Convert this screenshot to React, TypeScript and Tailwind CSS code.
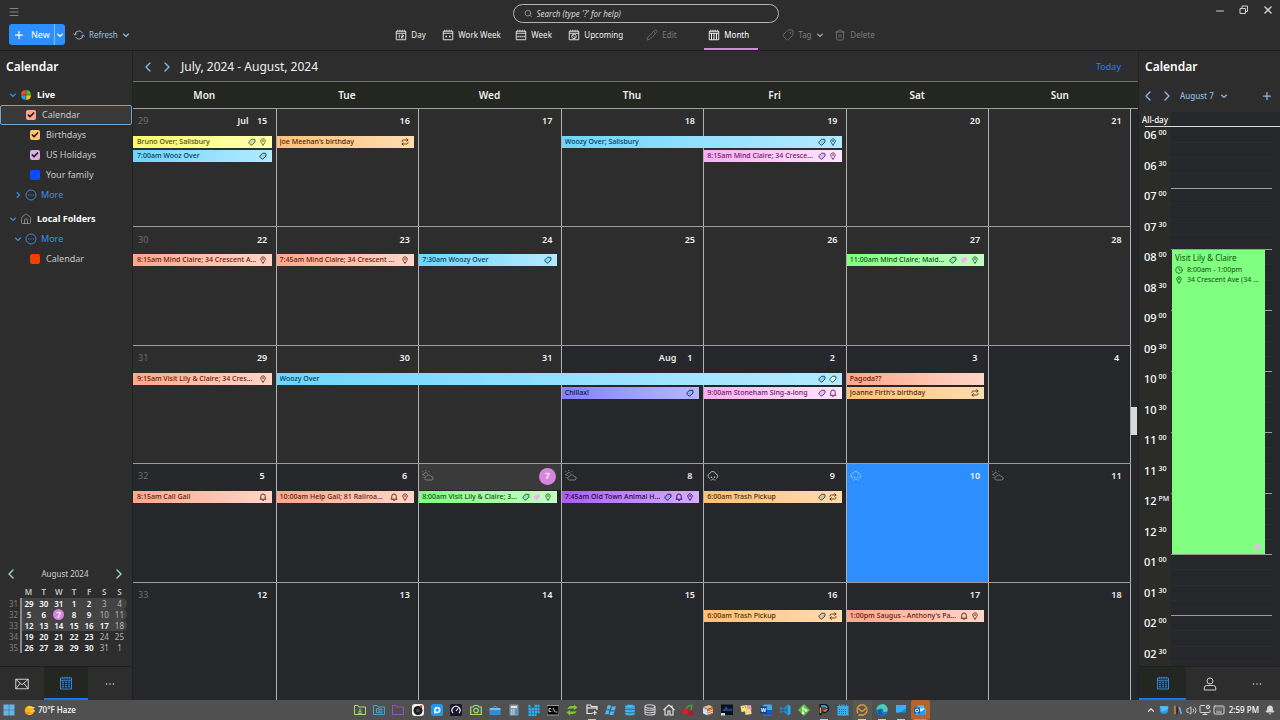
import type { ReactNode } from "react";
import { clsx } from "clsx";
import {
  Bell,
  Check,
  ChevronDown,
  ChevronLeft,
  ChevronRight,
  ChevronUp,
  Clock,
  House,
  Keyboard,
  Menu,
  Minus,
  MonitorCog,
  Pencil,
  Plus,
  Repeat,
  Search,
  Tag,
  Trash2,
  Volume2,
  X,
} from "lucide-react";

type Tone =
  | "yellow"
  | "blue"
  | "orange"
  | "pink"
  | "salmon"
  | "green"
  | "indigo"
  | "violet";
type Mark = "tag" | "tagLight" | "tagPink" | "pin" | "bell" | "repeat";

interface CalendarEvent {
  title: string;
  tone: Tone;
  col: number;
  span?: number;
  line?: number;
  marks?: Mark[];
}

interface Day {
  num: string;
  month?: string;
  dark?: boolean;
  today?: boolean;
  selected?: boolean;
  weather?: "sun" | "rain";
}

interface Week {
  num: string;
  days: Day[];
  events: CalendarEvent[];
}

const tones: Record<Tone, string> = {
  yellow: "from-[#fafa70] to-[#ffffae] text-[#4f4f00]",
  blue: "from-[#6cd6ff] to-[#b4eaff] text-[#073a55]",
  orange: "from-[#ffc078] to-[#ffdcb0] text-[#4e2a00]",
  pink: "from-[#f8b0f2] to-[#fde6fc] text-[#6e1668]",
  salmon: "from-[#ffa68c] to-[#ffd6c8] text-[#5c1a0c]",
  green: "from-[#80ff80] to-[#c4ffc4] text-[#0a520a]",
  indigo: "from-[#8282fa] to-[#b8b8ff] text-[#10104c]",
  violet: "from-[#a95cf6] to-[#d6aeff] text-[#24063f]",
};

const colStart = [
  "",
  "col-start-1",
  "col-start-2",
  "col-start-3",
  "col-start-4",
  "col-start-5",
  "col-start-6",
  "col-start-7",
];

const colSpan = ["", "col-span-1", "col-span-2", "col-span-3", "col-span-4"];

const weekdays = ["Mon", "Tue", "Wed", "Thu", "Fri", "Sat", "Sun"];

const weeks: Week[] = [
  {
    num: "29",
    days: [
      { num: "15", month: "Jul" },
      { num: "16" },
      { num: "17" },
      { num: "18" },
      { num: "19" },
      { num: "20" },
      { num: "21" },
    ],
    events: [
      { title: "Bruno Over; Salisbury", tone: "yellow", col: 1, marks: ["tag", "pin"] },
      { title: "7:00am Wooz Over", tone: "blue", col: 1, line: 2, marks: ["tag"] },
      { title: "Joe Meehan's birthday", tone: "orange", col: 2, marks: ["repeat"] },
      { title: "Woozy Over; Salisbury", tone: "blue", col: 4, span: 2, marks: ["tag", "pin"] },
      { title: "8:15am Mind Claire; 34 Cresce...", tone: "pink", col: 5, line: 2, marks: ["tag", "pin"] },
    ],
  },
  {
    num: "30",
    days: [
      { num: "22" },
      { num: "23" },
      { num: "24" },
      { num: "25" },
      { num: "26" },
      { num: "27" },
      { num: "28" },
    ],
    events: [
      { title: "8:15am Mind Claire; 34 Crescent A...", tone: "salmon", col: 1, marks: ["pin"] },
      { title: "7:45am Mind Claire; 34 Crescent ...", tone: "salmon", col: 2, marks: ["pin"] },
      { title: "7:30am Woozy Over", tone: "blue", col: 3, marks: ["tag"] },
      { title: "11:00am Mind Claire; Mald...", tone: "green", col: 6, marks: ["tag", "tagPink", "pin"] },
    ],
  },
  {
    num: "31",
    days: [
      { num: "29" },
      { num: "30" },
      { num: "31" },
      { num: "1", month: "Aug", dark: true },
      { num: "2", dark: true },
      { num: "3", dark: true },
      { num: "4", dark: true },
    ],
    events: [
      { title: "9:15am Visit Lily & Claire; 34 Cres...", tone: "salmon", col: 1, marks: ["pin"] },
      { title: "Woozy Over", tone: "blue", col: 2, span: 4, marks: ["tag", "tagLight"] },
      { title: "Chillax!", tone: "indigo", col: 4, line: 2, marks: ["tag"] },
      { title: "9:00am Stoneham Sing-a-long", tone: "pink", col: 5, line: 2, marks: ["tag", "bell"] },
      { title: "Pagoda??", tone: "salmon", col: 6 },
      { title: "Joanne Firth's birthday", tone: "orange", col: 6, line: 2, marks: ["repeat"] },
    ],
  },
  {
    num: "32",
    days: [
      { num: "5", dark: true },
      { num: "6", dark: true },
      { num: "7", dark: true, today: true, weather: "sun" },
      { num: "8", dark: true, weather: "sun" },
      { num: "9", dark: true, weather: "rain" },
      { num: "10", selected: true, weather: "rain" },
      { num: "11", dark: true, weather: "sun" },
    ],
    events: [
      { title: "8:15am Call Gail", tone: "salmon", col: 1, marks: ["bell"] },
      { title: "10:00am Help Gail; 81 Railroa...", tone: "salmon", col: 2, marks: ["bell", "pin"] },
      { title: "8:00am Visit Lily & Claire; 3...", tone: "green", col: 3, marks: ["tag", "tagPink", "pin"] },
      { title: "7:45am Old Town Animal H...", tone: "violet", col: 4, marks: ["tag", "bell", "pin"] },
      { title: "6:00am Trash Pickup", tone: "orange", col: 5, marks: ["tag", "repeat"] },
    ],
  },
  {
    num: "33",
    days: [
      { num: "12", dark: true },
      { num: "13", dark: true },
      { num: "14", dark: true },
      { num: "15", dark: true },
      { num: "16", dark: true },
      { num: "17", dark: true },
      { num: "18", dark: true },
    ],
    events: [
      { title: "6:00am Trash Pickup", tone: "orange", col: 5, marks: ["tag", "repeat"] },
      { title: "1:00pm Saugus - Anthony's Pa...", tone: "salmon", col: 6, marks: ["bell", "pin"] },
    ],
  },
];

const EventTag = ({ fill, stroke = "currentColor" }: { fill: string; stroke?: string }) => (
  <svg className="size-2" fill={fill} stroke={stroke} viewBox="0 0 16 16">
    <path d="M7 2.500h5.500q1.500 0 1.500 1.500v4L8.500 13.500q-2 1.500-3.500 0L2.500 11q-1.500-2 0-4Z" strokeWidth="1.700" />
  </svg>
);

const Pin = () => (
  <svg className="size-2" fill="none" stroke="currentColor" viewBox="0 0 16 16">
    <path d="M8 15 4.500 9a4.500 4.500 0 1 1 7 0Z" strokeWidth="1.600" />
    <circle cx="8" cy="6" fill="currentColor" r="1" />
  </svg>
);

const MarkIcon = ({ mark }: { mark: Mark }) => {
  switch (mark) {
    case "tag":
      return <EventTag fill="rgba(40,140,220,0.25)" />;
    case "tagLight":
      return <EventTag fill="#d9fbe6" />;
    case "tagPink":
      return <EventTag fill="#f3b4ee" stroke="none" />;
    case "pin":
      return <Pin />;
    case "bell":
      return (
        <svg className="size-2" fill="none" stroke="currentColor" viewBox="0 0 16 16">
          <path d="M3.500 12V6.500a4.500 4.500 0 0 1 9 0V12M1.500 12.500h13M6.500 14.800h3" strokeWidth="1.800" />
        </svg>
      );
    case "repeat":
      return <Repeat className="size-2" strokeWidth={2.5} />;
  }
};

const RainIcon = () => (
  <svg className="size-3" fill="none" stroke="currentColor" viewBox="0 0 24 24">
    <path d="M6 16.500a4.800 4.800 0 0 1-.5-9.400 6.500 6.500 0 0 1 12.400 1A4.300 4.300 0 0 1 18.500 16.500" strokeWidth="1.800" />
    <path d="M9 13v3M15 13v3M12 17v3M8 19v2M16 19v2" strokeWidth="2.400" />
  </svg>
);

const SunCloudIcon = () => (
  <svg className="size-3 text-[#8c8c8c]" fill="none" stroke="currentColor" viewBox="0 0 24 24">
    <path d="M9 20a3.500 3.500 0 0 1-.3-7 5 5 0 0 1 9.300 0 3.500 3.500 0 0 1 1.500 7Z" strokeWidth="1.700" />
    <path d="M4.500 12a4 4 0 1 1 6.500-4.500" strokeWidth="1.700" />
    <path d="M7.500 2v-2M2.500 4 1 2.500M1.500 9H-.5M12.500 4 14 2.500M3 14l-1.500 1.500" strokeWidth="1.700" />
  </svg>
);

const CalIcon = ({ kind, className }: { kind: string; className?: string }) => (
  <svg className={clsx("size-3", className)} fill="none" stroke="currentColor" viewBox="0 0 24 24">
    <path d="M2.500 4.500h19v17h-19zM2.500 8.500h19" strokeWidth="1.800" />
    <path d="M5.500 1.500v3M9.800 1.500v3M14.200 1.500v3M18.500 1.500v3" strokeWidth="1.600" />
    {kind === "day" && <path d="M8.500 11v7.500M12.500 12h4v3h-3.500v3h4" strokeWidth="1.700" />}
    {kind === "work" && <path d="M7 15h3M14 15h3" strokeWidth="3" />}
    {kind === "week" && <path d="M5 15h2.500M9 15h2.500M13 15h2.500M17 15h2.500" strokeWidth="3" />}
    {kind === "upcoming" && (
      <>
        <circle cx="12" cy="14.800" r="4.500" strokeWidth="1.700" />
        <path d="m9 12 6 6" strokeWidth="1.700" />
      </>
    )}
    {kind === "month" && <path d="M7 8.500v13M12 8.500v13M17 8.500v13" strokeWidth="1.900" />}
  </svg>
);

const GridCalendar = () => (
  <svg className="size-[14px]" fill="none" stroke="currentColor" viewBox="0 0 28 28">
    <path d="M3 4h22v22H3zM3 8.500h22" strokeWidth="1.800" />
    <path d="M7 1.500v3M11.700 1.500v3M16.300 1.500v3M21 1.500v3" strokeWidth="1.600" />
    <path d="M6.500 12.500h15M6.500 17h15M6.500 21.500h15" strokeDasharray="3 3" strokeWidth="3" />
  </svg>
);

const Chevron = ({ className, right }: { className?: string; right?: boolean }) => (
  <svg className={clsx("size-2 shrink-0", className)} fill="none" stroke="currentColor" viewBox="0 0 16 16">
    <path d={right ? "m5.500 2.500 5.500 5.500-5.500 5.500" : "m2.500 5.500 5.500 5.500 5.500-5.500"} strokeWidth="2.400" />
  </svg>
);

const tools = [
  { name: "Day", kind: "day", spot: "w-[47px]" },
  { name: "Work Week", kind: "work", spot: "w-[73px]" },
  { name: "Week", kind: "week", spot: "w-[53px]" },
  { name: "Upcoming", kind: "upcoming", spot: "w-[78px]" },
];

const TopBar = () => (
  <header className="border-b border-[#1f1f1f] bg-[#2d2d2d]">
    <div className="flex h-6 items-end justify-between">
      <button aria-label="Menu" className="flex h-6 w-[76px] items-center pl-2 text-[#8f8f8f]">
        <Menu className="size-3" strokeWidth={1.8} />
      </button>
      <label className="mb-[1px] ml-[2px] flex h-[19px] w-[266px] items-center gap-1 rounded-full border border-[#b4b4b4] px-[10px]">
        <Search className="size-[9px] text-[#b0b0b0]" />
        <input
          aria-label="Search"
          className="w-full bg-transparent text-[8px] italic text-white outline-none placeholder:text-[#d8d8d8]"
          placeholder="Search (type '?' for help)"
          type="text"
        />
      </label>
      <div className="flex h-6 w-[66px] items-start gap-3 pt-1 text-[#d0d0d0]">
        <button aria-label="Minimize" className="pt-[1px]">
          <Minus className="size-3" />
        </button>
        <button aria-label="Restore">
          <svg className="size-3" fill="none" stroke="currentColor" viewBox="0 0 24 24">
            <path d="M4 9h11v10H4zM8 8V4h11v11h-3" strokeWidth="2" />
          </svg>
        </button>
        <button aria-label="Close">
          <X className="size-3" strokeWidth={3} />
        </button>
      </div>
    </div>
    <nav className="grid h-[26px] grid-cols-[1fr_auto_1fr] pr-[10px] text-[8px] text-[#f0f0f0]">
      <div className="flex items-start">
        <div className="ml-[9px] flex h-[21px] overflow-hidden rounded-[3px] bg-[#2d8fff] text-white">
          <button className="flex w-[45px] items-center gap-[6px] pl-1 text-[9px]">
            <Plus className="size-3" strokeWidth={2.5} />
            New
          </button>
          <button aria-label="New item options" className="flex w-[11px] items-center justify-center border-l border-[#8cc2ff]">
            <Chevron />
          </button>
        </div>
        <button className="ml-2 flex h-[21px] items-center gap-1 text-[#9cc0e0]">
          <svg className="size-3" fill="none" stroke="currentColor" viewBox="0 0 24 24">
            <path d="M4 11a8 8 0 0 1 15-3M20 13a8 8 0 0 1-15 3" strokeWidth="1.800" />
            <path d="m1 9 3 3.500L7.500 9M16.500 15l3.500-3.500 3 3.500" strokeWidth="1.800" />
          </svg>
          Refresh
        </button>
        <button aria-label="Refresh options" className="ml-1 flex h-[21px] items-center text-[#9cc0e0]">
          <Chevron />
        </button>
      </div>
      <div className="flex">
        {tools.map((tool) => (
          <button key={tool.name} className={clsx("flex h-[22px] items-center gap-1 whitespace-nowrap", tool.spot)}>
            <CalIcon kind={tool.kind} />
            {tool.name}
          </button>
        ))}
        <button className="flex h-[22px] w-[58px] items-center gap-1 text-[#7c7c7c]">
          <Pencil className="size-3" strokeWidth={1.5} />
          Edit
        </button>
        <button className="flex h-[26px] w-[54px] items-center gap-1 border-b-2 border-[#d884e4] pb-[2px] pl-1 text-white">
          <CalIcon kind="month" />
          Month
        </button>
        <button className="ml-6 flex h-[22px] w-[52px] items-center gap-1 text-[#7c7c7c]">
          <Tag className="size-3 rotate-90" strokeWidth={1.5} />
          Tag
          <Chevron className="text-[#a8a8a8]" />
        </button>
        <button className="flex h-[22px] items-center gap-1 text-[#7c7c7c]">
          <Trash2 className="size-3" strokeWidth={1.5} />
          Delete
        </button>
      </div>
    </nav>
  </header>
);

interface FolderProps {
  name: string;
  box: string;
  checked?: boolean;
  selected?: boolean;
}

const Folder = ({ name, box, checked, selected }: FolderProps) => (
  <label
    className={clsx(
      "flex h-5 items-center gap-[6px] text-[#c8c8c8]",
      selected ? "rounded-[2px] border border-[#6ea4d0] bg-[#393939] pl-[25px]" : "pl-[30px]",
    )}
  >
    <span className="grid size-[10px]">
      <input
        className={clsx("col-start-1 row-start-1 size-[10px] appearance-none rounded-[2px]", box)}
        defaultChecked={checked}
        type="checkbox"
      />
      {checked && (
        <Check className="pointer-events-none col-start-1 row-start-1 m-[1px] size-2 text-[#301820]" strokeWidth={5} />
      )}
    </span>
    {name}
  </label>
);

const MoreRow = ({ open }: { open?: boolean }) => (
  <button className="flex h-5 w-full items-center gap-[3px] pl-[14px] text-[#3b8ee8]">
    <Chevron right={!open} />
    <svg className="size-3" fill="none" stroke="currentColor" viewBox="0 0 24 24">
      <circle cx="12" cy="12" r="10" strokeWidth="1.800" />
      <path d="M6.500 12h2M11 12h2M15.500 12h2" strokeWidth="2.200" />
    </svg>
    <span className="pl-[1px]">More</span>
  </button>
);

const miniWeeks = [
  { num: "31", days: ["29", "30", "31", "1", "2", "3", "4"], bold: 5 },
  { num: "32", days: ["5", "6", "7", "8", "9", "10", "11"], bold: 5 },
  { num: "33", days: ["12", "13", "14", "15", "16", "17", "18"], bold: 6 },
  { num: "34", days: ["19", "20", "21", "22", "23", "24", "25"], bold: 5 },
  { num: "35", days: ["26", "27", "28", "29", "30", "31", "1"], bold: 5 },
];

const MiniCalendar = () => (
  <div className="pr-[5px] pb-[13px] pl-[7px] text-[8px] text-[#c4c4c4]">
    <div className="flex h-5 items-center justify-between text-[#9cd4dc]">
      <button aria-label="Previous month">
        <ChevronLeft className="-ml-1 size-4" />
      </button>
      <span className="text-[#d0d0d0]">August 2024</span>
      <button aria-label="Next month">
        <ChevronRight className="size-4" />
      </button>
    </div>
    <table className="mt-[2px] w-full table-fixed border-collapse text-center">
      <thead>
        <tr className="h-3 leading-3">
          <th className="w-[14px]" />
          {["M", "T", "W", "T", "F", "S", "S"].map((day, index) => (
            <th key={index} className="font-semibold">
              {day}
            </th>
          ))}
        </tr>
      </thead>
      <tbody>
        {miniWeeks.map((week, row) => (
          <tr key={week.num} className="h-[11px] leading-[11px]">
            <td className="border-r-2 border-[#8a8a8a] text-[#7e7e7e]">{week.num}</td>
            {week.days.map((day, index) => (
              <td
                key={day}
                className={clsx(
                  row < 3 && "bg-[#434343]",
                  row < 3 && index === 6 && "rounded-r-full",
                  index < week.bold ? "font-semibold text-white" : "text-[#b4b4b4]",
                )}
              >
                {row === 1 && index === 2 ? (
                  <span className="mx-auto block size-[11px] rounded-full bg-[#d884e0]">{day}</span>
                ) : (
                  day
                )}
              </td>
            ))}
          </tr>
        ))}
      </tbody>
    </table>
  </div>
);

const Sidebar = () => (
  <aside className="flex w-[133px] shrink-0 flex-col border-r border-[#222222] bg-[#2d2d2d] text-[9px]">
    <h1 className="mb-[2px] flex h-8 items-center pl-[6px] text-[12px] font-semibold text-white">Calendar</h1>
    <button className="flex h-5 items-center pl-[9px] font-bold text-white">
      <Chevron className="text-[#3b8ee8]" />
      <svg className="mx-1 size-[10px]" viewBox="0 0 20 20">
        <path d="M9.500 9.500H0A10 10 0 0 1 9.500 0Z" fill="#f25022" />
        <path d="M10.500 9.500V0A10 10 0 0 1 20 9.500Z" fill="#62b52c" />
        <path d="M9.500 10.500V20A10 10 0 0 1 0 10.500Z" fill="#17a2f0" />
        <path d="M10.500 10.500H20A10 10 0 0 1 10.500 20Z" fill="#ffc20e" />
      </svg>
      <span className="pl-[2px]">Live</span>
    </button>
    <Folder checked selected box="bg-[#ffa68c]" name="Calendar" />
    <Folder checked box="bg-[#ffc670]" name="Birthdays" />
    <Folder checked box="bg-[#d8b0e8]" name="US Holidays" />
    <Folder box="bg-[#0a4cff]" name="Your family" />
    <MoreRow />
    <button className="mt-1 flex h-5 items-center pl-[9px] font-bold text-white">
      <Chevron className="text-[#3b8ee8]" />
      <House className="mx-[3px] size-3 text-[#a0a0a0]" strokeWidth={1.5} />
      <span className="pl-[2px]">Local Folders</span>
    </button>
    <MoreRow open />
    <Folder box="bg-[#f04000]" name="Calendar" />
    <div className="mt-auto">
      <MiniCalendar />
      <div className="flex h-[34px] border-t border-[#1f1f1f] text-[#e0e0e0]">
        <button aria-label="Mail" className="flex flex-1 items-center justify-center">
          <svg className="h-3 w-[14px]" fill="none" stroke="currentColor" viewBox="0 0 28 24">
            <path d="M1.500 2.500h25v19h-25zM1.500 2.500 14 13.500l12.500-11M1.500 21.500l9-11M26.500 21.500l-9-11" strokeWidth="1.800" />
          </svg>
        </button>
        <button
          aria-label="Calendar view"
          className="flex flex-1 items-center justify-center border-b-2 border-[#1478f0] bg-[#242622] text-[#3b8ee8]"
        >
          <GridCalendar />
        </button>
        <button aria-label="More views" className="flex flex-1 items-center justify-center">
          <Dots />
        </button>
      </div>
    </div>
  </aside>
);

const Dots = () => (
  <svg className="h-3 w-[10px]" fill="currentColor" viewBox="0 0 20 24">
    <circle cx="3" cy="12" r="1.500" />
    <circle cx="10" cy="12" r="1.500" />
    <circle cx="17" cy="12" r="1.500" />
  </svg>
);

const DayCell = ({ day, col, week }: { day: Day; col: number; week: string }) => (
  <div
    className={clsx(
      "row-span-full border-[#b0b0b0]",
      colStart[col],
      col > 1 && "border-l",
      col === 7 && "border-r",
      day.selected ? "bg-[#2d8fff]" : day.dark ? "bg-[#26272b]" : "bg-[#2d2d2d]",
    )}
  >
    <div
      className={clsx(
        "flex items-center pr-[5px] pl-[3px] text-[9px] font-semibold text-[#f0f0f0]",
        day.today ? "h-[26px] bg-[#3a3a3a] pb-[2px]" : "h-6",
      )}
    >
      {col === 1 && <span className="pl-[2px] font-normal text-[#6e6e6e]">{week}</span>}
      {day.weather === "sun" && <SunCloudIcon />}
      {day.weather === "rain" && (
        <span className={day.selected ? "text-[#9cc8ff]" : "text-[#b4b4b4]"}>
          <RainIcon />
        </span>
      )}
      <span className="mr-[5px] ml-auto">{day.month}</span>
      <span
        className={clsx(
          "flex size-[17px] items-center justify-center rounded-full",
          day.today && "bg-[#d884e0] text-white",
        )}
      >
        {day.num}
      </span>
    </div>
  </div>
);

const EventBar = ({ event }: { event: CalendarEvent }) => (
  <button
    className={clsx(
      "z-10 mr-1 flex h-3 min-w-0 items-center gap-[3px] bg-linear-to-r pr-[5px] text-left text-[7px] leading-3 font-medium",
      tones[event.tone],
      colStart[event.col],
      colSpan[event.span ?? 1],
      event.col > 1 ? "ml-[1px] pl-[3px]" : "pl-1",
      event.line === 2 ? "row-start-3" : "row-start-2",
    )}
  >
    <span className="min-w-0 flex-1 overflow-hidden whitespace-nowrap">{event.title}</span>
    {event.marks?.map((mark) => (
      <span key={mark} className="shrink-0">
        <MarkIcon mark={mark} />
      </span>
    ))}
  </button>
);

const MonthView = () => (
  <main className="flex min-w-0 flex-1 flex-col">
    <div className="flex h-[31px] shrink-0 items-center border-b border-[#707070] bg-[#2d2d2d] pt-[2px] pr-[17px] pl-[7px]">
      <button aria-label="Previous" className="text-[#8cb8e0]">
        <ChevronLeft className="size-4" />
      </button>
      <button aria-label="Next" className="ml-[3px] text-[#8cb8e0]">
        <ChevronRight className="size-4" />
      </button>
      <h2 className="ml-[6px] text-[12px] text-[#f0f0f0]">July, 2024 - August, 2024</h2>
      <button className="ml-auto text-[9px] text-[#1880f8]">Today</button>
    </div>
    <div className="flex h-[27px] shrink-0 border-b border-[#a0a0a0] bg-[#242622] pr-[7px]">
      {weekdays.map((day) => (
        <div key={day} className="flex flex-1 items-center justify-center text-[10px] font-semibold text-[#f0f0f0]">
          {day}
        </div>
      ))}
    </div>
    <div className="flex min-h-0 flex-1">
      <div className="flex flex-1 flex-col">
        {weeks.map((week) => (
          <div
            key={week.num}
            className="grid flex-1 grid-cols-7 grid-rows-[27px_14px_14px_1fr] border-b border-[#9c9c9c] last:border-b-0"
          >
            {week.days.map((day, index) => (
              <DayCell key={day.num} col={index + 1} day={day} week={week.num} />
            ))}
            {week.events.map((event) => (
              <EventBar key={event.title} event={event} />
            ))}
          </div>
        ))}
      </div>
      <div className="flex w-[7px] flex-col bg-[#26272b]">
        <div className="grow-[298]" />
        <div className="mr-[1px] h-7 bg-[#d8d8d8]" />
        <div className="grow-[265]" />
      </div>
    </div>
  </main>
);

const hours = [
  { hour: "06", row: "row-start-1" },
  { hour: "07", row: "row-start-2" },
  { hour: "08", row: "row-start-3" },
  { hour: "09", row: "row-start-4" },
  { hour: "10", row: "row-start-5" },
  { hour: "11", row: "row-start-6" },
  { hour: "12", row: "row-start-7" },
  { hour: "01", row: "row-start-8" },
  { hour: "02", row: "row-start-9" },
];

const DayPanel = () => (
  <aside className="flex w-[142px] shrink-0 flex-col border-l border-[#222222] bg-[#2d2d2d]">
    <h2 className="flex h-8 shrink-0 items-center pl-[6px] text-[12px] font-semibold text-white">Calendar</h2>
    <div className="mb-1 flex h-[25px] shrink-0 items-center pr-[7px] pl-[1px] text-[8px] text-[#8cb8e0]">
      <button aria-label="Previous day">
        <ChevronLeft className="size-4" />
      </button>
      <button aria-label="Next day" className="ml-[3px]">
        <ChevronRight className="size-4" />
      </button>
      <button className="ml-[5px] flex items-center gap-[6px] font-medium">
        August 7 <Chevron />
      </button>
      <button aria-label="Add event" className="ml-auto">
        <Plus className="size-3" strokeWidth={2.5} />
      </button>
    </div>
    <div className="flex h-[14px] shrink-0">
      <span className="flex w-8 items-end pl-[3px] text-[8px] leading-3 font-medium whitespace-nowrap text-white">
        All-day
      </span>
      <span className="flex-1 bg-[#26272b]" />
    </div>
    <div className="ml-[6px] h-[1px] shrink-0 bg-[#d8dcd8]" />
    <div className="min-h-0 flex-1 overflow-hidden">
      <div className="grid auto-rows-[61px] grid-cols-[32px_1fr_8px]">
        {hours.map(({ hour, row }) => (
          <div key={hour} className={clsx("col-start-1 flex flex-col bg-[#2b2c29] pl-[5px] text-[11px] text-white", row)}>
            {[hour === "12" ? "PM" : "00", "30"].map((minutes) => (
              <div key={minutes} className="flex flex-1 items-start gap-[2px] pt-[1px] font-medium">
                <span className="leading-[14px]">{hour}</span>
                <span className="text-[7px] leading-[10px]">{minutes}</span>
              </div>
            ))}
          </div>
        ))}
        {hours.map(({ hour, row }, index) => (
          <div
            key={hour}
            className={clsx(
              "col-start-2 flex flex-col justify-evenly bg-[#26272b]",
              row,
              index > 0 && "border-t border-[#9a9c9a]",
            )}
          >
            <span className="h-px bg-[#2b2c30]" />
            <span className="h-px bg-[#2b2c30]" />
            <span className="h-px bg-[#2b2c30]" />
          </div>
        ))}
        <div className="col-start-3 row-start-1 row-end-10 bg-[#26272b]" />
        <button className="z-10 col-start-2 row-start-3 row-end-8 mt-[1px] mr-[7px] ml-[1px] flex flex-col bg-[#80ff80] pt-[3px] pr-1 pl-[3px] text-left text-[7px] leading-[10px] text-[#0a520a]">
          <span className="text-[8px]">Visit Lily &amp; Claire</span>
          <span className="mt-[2px] flex items-center gap-1">
            <Clock className="size-2" />
            8:00am - 1:00pm
          </span>
          <span className="flex items-center gap-1 whitespace-nowrap">
            <Pin />
            34 Crescent Ave (34 ...
          </span>
          <span className="mt-auto self-end pb-[3px]">
            <MarkIcon mark="tagPink" />
          </span>
        </button>
      </div>
    </div>
    <div className="flex h-[34px] shrink-0 border-t border-[#1f1f1f] text-[#d8d8d8]">
      <button
        aria-label="Agenda"
        className="flex flex-1 items-center justify-center border-b-2 border-[#1478f0] bg-[#242622] text-[#3b8ee8]"
      >
        <GridCalendar />
      </button>
      <button aria-label="Contacts" className="flex flex-1 items-center justify-center">
        <svg className="size-[14px]" fill="none" stroke="currentColor" viewBox="0 0 28 28">
          <circle cx="14" cy="8" r="6" strokeWidth="1.900" />
          <path d="M2.500 26v-4q0-5 5-5h13q5 0 5 5v4z" strokeWidth="1.900" />
        </svg>
      </button>
      <button aria-label="More panels" className="flex flex-1 items-center justify-center">
        <Dots />
      </button>
    </div>
  </aside>
);

const folderPath = "M1 3h7l2 3h13v15H1z";

interface TaskbarApp {
  name: string;
  art: ReactNode;
  open?: boolean;
}

const apps: TaskbarApp[] = [
  {
    name: "Downloads",
    art: (
      <g fill="none" stroke="#a8d878" strokeWidth="2">
        <path d={folderPath} />
        <path d="M12 9v7M9 13.500l3 3 3-3M8 18.500h8" />
      </g>
    ),
  },
  {
    name: "Documents",
    art: (
      <g fill="none" stroke="#48a0c8" strokeWidth="2">
        <path d={folderPath} />
        <path d="M7 9h5v8H7zM14 10h4v8h-4z" />
      </g>
    ),
  },
  { name: "Projects", art: <path d={folderPath} fill="none" stroke="#9c50b8" strokeWidth="2.200" /> },
  {
    name: "Recorder",
    art: (
      <>
        <rect fill="#f0f0f0" height="24" rx="6" width="24" />
        <circle cx="12" cy="13" fill="#1c1c1c" r="9" />
        <circle cx="12" cy="13" fill="#484848" r="4" />
        <circle cx="18" cy="5" fill="#d83030" r="2.500" />
      </>
    ),
  },
  {
    name: "Disk",
    art: (
      <>
        <rect fill="#2098f0" height="24" rx="5" width="24" />
        <path d="M6 19v-7a6.500 6.500 0 1 1 6.500 6.500z" fill="#e0f4ff" />
        <circle cx="12.500" cy="12" fill="#2098f0" r="3" />
      </>
    ),
  },
  {
    name: "Speed test",
    art: (
      <>
        <rect fill="#181828" height="24" rx="3" width="24" />
        <path d="M6 18a8 8 0 1 1 12 0M12 14l4-5" fill="none" stroke="#e8e8f0" strokeWidth="2.400" />
      </>
    ),
  },
  {
    name: "Camera",
    art: (
      <g fill="none" stroke="#a0e070" strokeWidth="2.400">
        <path d="M1.500 6h5l2-3h7l2 3h5v15h-21z" />
        <circle cx="12" cy="13" r="4.500" />
      </g>
    ),
  },
  {
    name: "Toolbox",
    art: (
      <>
        <path d="M7 8q5-7 10 0" fill="none" stroke="#40b0f0" strokeWidth="2" />
        <path d="M1 8h22v5H1z" fill="#58c8ff" />
        <path d="M1 14h22v8H1z" fill="#2890d8" />
      </>
    ),
  },
  {
    name: "Calculator",
    art: (
      <>
        <rect fill="#8898a8" height="22" rx="2" width="18" x="3" y="1" />
        <path d="M6 4h12v4H6z" fill="#d8e8f0" />
        <path d="M6 12h7M6 16h7M6 20h7" stroke="#d8e0e8" strokeDasharray="3 1" strokeWidth="2" />
        <path d="M15 11h4v10h-4z" fill="#2898e8" />
      </>
    ),
  },
  {
    name: "Tiles",
    art: (
      <g stroke="#28b0f8" strokeWidth="5">
        <path d="M1 4h4M13 4h10" strokeDasharray="5 1" />
        <path d="M1 10h22M1 16h22" strokeDasharray="5 1" />
        <path d="M1 22h16" strokeDasharray="5 1" />
      </g>
    ),
  },
  {
    name: "Terminal",
    art: (
      <>
        <path d="M0 3h24v19H0z" fill="#080808" stroke="#b8b8b8" strokeWidth="1.500" />
        <path d="M8 9H4v6h4M10 10v1M10 14v1M12 8l4 8M17 16h4" fill="none" stroke="#f0f0f0" strokeWidth="1.600" />
      </>
    ),
  },
  {
    name: "Sync",
    art: (
      <g fill="#78c830">
        <path d="M3 10q1-6 8-6h5V1l7 6-7 5V9h-5q-4 0-8 1z" />
        <path d="M21 14q-1 6-8 6H8v3l-7-6 7-5v3h5q4 0 8-1z" />
      </g>
    ),
  },
  {
    name: "File manager",
    open: true,
    art: (
      <g fill="none" stroke="#e8e8e8" strokeWidth="2.400">
        <path d="M13 19H2V2h7l2 3h11v7" />
        <path d="M2 8h20" />
        <path d="M17.500 13v9M13 17.500h9" />
      </g>
    ),
  },
  {
    name: "Windows tools",
    art: (
      <g fill="#48b8f8">
        <path d="M5 3q4-2 7 0l-2 8q-3-2-7 0z" />
        <path d="M14 4q4 2 8 0l-2 8q-4 2-8 0z" />
        <path d="M2 13q4-2 7 0l-2 8q-3-2-7 0z" />
        <path d="M11 14q4 2 8 0l-2 7q-4 2-8 0z" />
      </g>
    ),
  },
  {
    name: "Database",
    art: (
      <g fill="#40b8f8" stroke="#306080" strokeWidth="1">
        <path d="M2 17v3c0 4 20 4 20 0v-3zM2 11v4c0 4 20 4 20 0v-4zM2 5v4c0 4 20 4 20 0V5z" />
        <ellipse cx="12" cy="5" rx="10" ry="4" />
      </g>
    ),
  },
  {
    name: "SQL",
    art: (
      <g fill="none" stroke="#d0d0d8" strokeWidth="2.200">
        <ellipse cx="12" cy="5" rx="10" ry="3.500" />
        <path d="M2 5v14c0 4 20 4 20 0V5M2 9.500c0 4 20 4 20 0M2 14.500c0 4 20 4 20 0" />
      </g>
    ),
  },
  {
    name: "Home",
    art: <path d="M1 12 12 2l11 10M4 10v12h6v-8h4v8h6V10M18 7V3" fill="none" stroke="#e8e8e8" strokeWidth="2.200" />,
  },
  {
    name: "Cherry",
    art: (
      <>
        <path d="M7 13q2-9 13-11-2 7-2 13" fill="none" stroke="#48a838" strokeWidth="2.500" />
        <path d="M10 5q4-5 11-3-4 6-11 3z" fill="#3c9830" />
        <circle cx="6.500" cy="15" fill="#d02030" r="6" />
        <circle cx="17.500" cy="18" fill="#b81828" r="5.500" />
      </>
    ),
  },
  {
    name: "Packages",
    art: (
      <>
        <path d="m2 6 12-4 8 4-11 4z" fill="#f8b870" />
        <path d="m2 7 9 4v12l-9-4z" fill="#b0d8f0" />
        <path d="m12 11 10-4v12l-10 4z" fill="#e07038" />
        <path d="m2 12 9 4 11-4M2 16l9 4 11-4" fill="none" stroke="#f8f8f8" strokeWidth="1.500" />
      </>
    ),
  },
  {
    name: "Viewer",
    art: (
      <>
        <path d="M0 1h24v21H0z" fill="#081020" />
        <path d="m2 14 9-10 3 7 8-3v6z" fill="#1c4880" />
        <path d="M0 18h8v5H0z" fill="#d0d8e0" />
      </>
    ),
  },
  {
    name: "Sticky notes",
    art: (
      <>
        <path d="m1 4 13-2 2 12-13 2z" fill="#f0e878" />
        <path d="m9 9 13-2 1 13-12 2z" fill="#e8d890" />
        <path d="m13 3 9-1 1 8-8 1z" fill="#f098b8" />
        <path d="M5 7h2M10 6h2" stroke="#806020" strokeWidth="2" />
      </>
    ),
  },
  {
    name: "Word",
    art: (
      <>
        <rect fill="#40a8f0" height="22" rx="2" width="18" x="6" y="1" />
        <path d="M6 12h18v11H6z" fill="#185abd" />
        <rect fill="#103f91" height="14" rx="1" width="14" y="5" />
        <text fill="#ffffff" fontSize="11" fontWeight="700" textAnchor="middle" x="7" y="16">
          W
        </text>
      </>
    ),
  },
  {
    name: "Code",
    art: (
      <>
        <path d="m17 1 6 3v16l-6 3z" fill="#28a8f0" />
        <path d="M17 1v7L4 18l-3-2.500zM17 23v-7L4 6 1 8.500z" fill="#1888d0" />
      </>
    ),
  },
  {
    name: "Git",
    art: (
      <>
        <path d="m12 0 12 12-12 12L0 12z" fill="#58c838" />
        <path d="M10 5v13M10 8l6 5" stroke="#ffffff" strokeWidth="2" />
        <circle cx="10" cy="18" fill="#ffffff" r="2.500" />
        <circle cx="16" cy="13" fill="#ffffff" r="2.500" />
      </>
    ),
  },
  {
    name: "Paint",
    open: true,
    art: (
      <>
        <path d="M5 22V2h8a7 7 0 0 1 0 14H9" fill="none" stroke="#101828" strokeWidth="5" />
        <path d="M5 18V7" stroke="#f89830" strokeWidth="3" />
        <path d="M6 4h7a5 5 0 0 1 5 4" fill="none" stroke="#38b8e8" strokeWidth="3" />
        <path d="M18 10q-1 4-7 4" fill="none" stroke="#f07048" strokeWidth="3" />
      </>
    ),
  },
  {
    name: "Planner",
    art: (
      <>
        <path d="M1 4h22v19H1z" fill="#38b0f0" />
        <path d="M5 1v5M10 1v5M14 1v5M19 1v5" stroke="#38b0f0" strokeWidth="2" />
        <path d="M4 11h16M4 15h16M4 19h16" stroke="#1870a8" strokeDasharray="2 2" strokeWidth="2" />
      </>
    ),
  },
  {
    name: "Mail client",
    open: true,
    art: (
      <g fill="none" stroke="#e8a030" strokeWidth="2.600">
        <path d="M4 18A10 10 0 1 1 20 18q-2 3-6 4H5" />
        <path d="m4 9 8 6 8-6" />
      </g>
    ),
  },
  {
    name: "Edge",
    open: true,
    art: (
      <>
        <circle cx="12" cy="12" fill="#1878d0" r="11.500" />
        <path d="M1 12A11 11 0 0 1 23.500 11q0 5-6 5-4 0-3-3 0-5-6-4-5 1-7.500 3z" fill="#48d0b0" />
        <path d="M11 11q-3 7 4 10-9 2-11-5 0-5 7-5z" fill="#0c58a0" />
      </>
    ),
  },
  {
    name: "Remote desktop",
    open: true,
    art: (
      <>
        <path d="M2 2h20v15H2z" fill="#1890e0" />
        <path d="M2 2h20v6L10 17H2z" fill="#38b0f8" />
        <path d="M9 17h6v3H9z" fill="#1060a0" />
      </>
    ),
  },
  {
    name: "Outlook",
    open: true,
    art: (
      <>
        <path d="M7 3h13v9H7z" fill="#50c0ff" />
        <path d="M5 9h18v13H5z" fill="#d0ecff" />
        <path d="m5 22 9-8 9 8zM23 9v13l-8-7z" fill="#2898e8" />
        <rect fill="#0c60b8" height="12" rx="1" width="12" y="7" />
        <circle cx="6" cy="13" fill="none" r="3" stroke="#ffffff" strokeWidth="2" />
      </>
    ),
  },
];

const Taskbar = () => (
  <footer className="grid h-5 shrink-0 grid-cols-[1fr_auto_1fr] items-center bg-[#505050] text-[8px] font-medium text-white">
    <div className="flex items-center">
      <button aria-label="Start" className="ml-[3px]">
        <svg className="size-3" fill="#60b8f0" viewBox="0 0 24 24">
          <path d="M1 1h10.500v10.500H1zM12.500 1H23v10.500H12.500zM1 12.500h10.500V23H1zM12.500 12.500H23V23H12.500z" />
        </svg>
      </button>
      <button className="ml-[9px] flex items-center gap-[3px]">
        <svg className="size-[11px]" viewBox="0 0 22 22">
          <circle cx="11" cy="11" fill="#ffb020" r="9.500" />
          <path d="M8 5h13M13 12h9" stroke="#ffe090" strokeWidth="2.200" />
          <path d="M2 16h9" stroke="#e07818" strokeWidth="2" />
        </svg>
        70°F Haze
      </button>
    </div>
    <div className="flex h-5 w-[580px]">
      {apps.map((app) => (
        <button
          key={app.name}
          aria-label={app.name}
          className={clsx(
            "flex flex-1 flex-col items-center justify-between pt-1",
            app.name === "Outlook" && "rounded-[2px] bg-[#b4642c]",
            app.name === "Mail client" && "bg-[#5a5855]",
          )}
        >
          <svg className="size-3" viewBox="0 0 24 24">
            {app.art}
          </svg>
          {app.open && (
            <span className={clsx("h-[1px]", app.name === "Outlook" ? "w-3 bg-[#ff8020]" : "w-2 bg-[#c8c8c8]")} />
          )}
        </button>
      ))}
    </div>
    <div className="flex items-center justify-end gap-[2px] pr-[5px] text-[#d8d8d8]">
      <ChevronUp className="size-[10px]" strokeWidth={3} />
      <svg className="mx-[1px] size-[10px]" viewBox="0 0 24 24">
        <path d="M2 3h20v13l-6 5H8l-6-5z" fill="#20a0f0" />
        <path d="M2 3h20v6L8 17z" fill="#50c0ff" />
      </svg>
      <svg className="mx-[1px] size-[10px]" viewBox="0 0 24 24">
        <path d="M2 2h5v20H2z" fill="#b07840" />
        <path d="M8 4h4v18H8z" fill="#282828" />
        <path d="m13 5 4-1 5 17-4 1z" fill="#70a8e0" />
      </svg>
      <Volume2 className="size-[11px]" />
      <MonitorCog className="size-3" />
      <Keyboard className="mr-[2px] size-3" />
      <span className="whitespace-nowrap text-white">2:59 PM</span>
      <Bell className="ml-1 size-[10px]" fill="currentColor" />
    </div>
  </footer>
);

const App = () => (
  <div className="flex h-screen min-h-[600px] flex-col overflow-hidden bg-[#2d2d2d] font-['Noto_Sans','Open_Sans',sans-serif]">
    <TopBar />
    <div className="flex min-h-0 flex-1">
      <Sidebar />
      <MonthView />
      <DayPanel />
    </div>
    <Taskbar />
  </div>
);

export default App;
